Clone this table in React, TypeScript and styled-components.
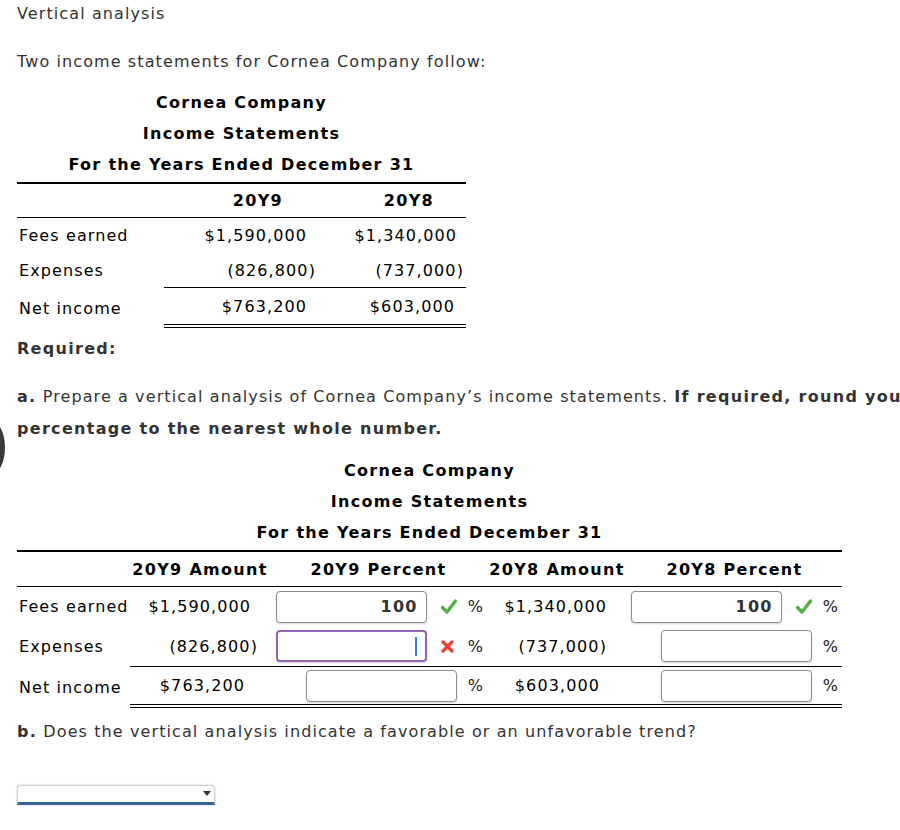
import styled, { createGlobalStyle } from "styled-components";

const GlobalStyle = createGlobalStyle`
  html, body {
    margin: 0;
    padding: 0;
    background: #fff;
    overflow: hidden;
  }
  body {
    font-family: "DejaVu Sans", Verdana, sans-serif;
    font-size: 16px;
    letter-spacing: 1.1px;
    color: #333;
  }
  b, th {
    letter-spacing: 1.3px;
  }
`;

const Page = styled.div`
  position: relative;
  width: 900px;
  height: 830px;
  box-sizing: border-box;
  padding: 4px 0 0 17px;
`;

const Para = styled.p<{ $top: number }>`
  margin: ${(p) => p.$top}px 0 0;
  line-height: 20px;
  white-space: nowrap;
`;

const LongPara = styled.p`
  margin: 22px 0 0;
  line-height: 32px;
  white-space: nowrap;
`;

const B = styled.b`
  font-weight: bold;
`;

const Statement = styled.div<{ $width: number; $top: number }>`
  width: ${(p) => p.$width}px;
  margin-top: ${(p) => p.$top}px;
  color: #000;
`;

const Titles = styled.div`
  text-align: center;
  font-weight: bold;
  letter-spacing: 1.3px;
  line-height: 31px;
  margin-bottom: 2px;
`;

const Table = styled.table`
  width: 100%;
  border-collapse: separate;
  border-spacing: 0;
  table-layout: fixed;
  font-size: 16px;
`;

const Row = styled.tr<{ $h: number }>`
  height: ${(p) => p.$h}px;
`;

const HeadCell = styled.th<{ $align?: string; $pr?: number }>`
  padding: 0 ${(p) => p.$pr ?? 0}px 0 0;
  text-align: ${(p) => p.$align ?? "center"};
  font-weight: bold;
  border-top: 2px solid #000;
  border-bottom: 1px solid #000;
  white-space: nowrap;
`;

const Label = styled.td`
  padding: 0 0 0 2px;
  text-align: left;
  white-space: nowrap;
`;

const Amount = styled.td<{ $pr: number; $line?: "single" | "double" }>`
  padding: 0 ${(p) => p.$pr}px 0 0;
  text-align: right;
  white-space: nowrap;
  border-bottom: ${(p) =>
    p.$line === "single"
      ? "1px solid #000"
      : p.$line === "double"
      ? "4px double #000"
      : "none"};
`;

const PctCell = styled.td<{ $line?: "single" | "double" }>`
  padding: 0 4px 0 0;
  border-bottom: ${(p) =>
    p.$line === "single"
      ? "1px solid #000"
      : p.$line === "double"
      ? "4px double #000"
      : "none"};
`;

const PctWrap = styled.div`
  display: flex;
  justify-content: flex-end;
  align-items: center;
`;

const Field = styled.div<{ $focused?: boolean }>`
  box-sizing: border-box;
  width: 151px;
  height: 32px;
  display: flex;
  align-items: center;
  justify-content: flex-end;
  padding-right: 8px;
  background: #fff;
  border: ${(p) => (p.$focused ? "2px solid #9265b5" : "1px solid #8c8c8c")};
  border-radius: 4px;
  box-shadow: 0 1px 2px rgba(0, 0, 0, 0.18);
  font-weight: bold;
  letter-spacing: 1.3px;
  color: #333;
`;

const Caret = styled.span`
  display: block;
  width: 2px;
  height: 19px;
  background: #3b82c4;
`;

const IconBox = styled.span`
  display: flex;
  width: 16px;
  margin-left: 14px;
`;

const Percent = styled.span`
  margin-left: 11px;
  letter-spacing: 0;
  color: #222;
`;

const Dropdown = styled.div`
  margin-top: 43px;
  position: relative;
  width: 198px;
  height: 20px;
  box-sizing: border-box;
  background: #fff;
  border: 1px solid #d0d0d0;
  border-bottom: 3px solid #3c6597;
  border-radius: 4px 4px 0 0;
  box-shadow: 0 0 2px rgba(0, 0, 0, 0.25);
`;

const Arrow = styled.span`
  position: absolute;
  right: 3px;
  top: 5px;
  width: 0;
  height: 0;
  border-left: 4px solid transparent;
  border-right: 4px solid transparent;
  border-top: 5px solid #333;
`;

const HintTab = styled.div`
  position: absolute;
  left: -22px;
  top: 421px;
  width: 27px;
  height: 53px;
  border-radius: 50%;
  background: #3a3a3a;
`;

const Check = () => (
  <svg width="16" height="15" viewBox="0 0 16 15">
    <path
      d="M1.5 8.5 L6 13 L14.5 2"
      fill="none"
      stroke="#55ad47"
      strokeWidth="3.4"
      strokeLinecap="round"
      strokeLinejoin="round"
    />
  </svg>
);

const Cross = () => (
  <svg width="13" height="13" viewBox="0 0 13 13">
    <path
      d="M2 2 L11 11 M11 2 L2 11"
      fill="none"
      stroke="#e5412d"
      strokeWidth="3.2"
      strokeLinecap="round"
    />
  </svg>
);

type Mark = "check" | "cross" | undefined;

const PctInput = ({
  value,
  mark,
  focused,
}: {
  value?: string;
  mark?: Mark;
  focused?: boolean;
}) => (
  <PctWrap>
    <Field $focused={focused}>{focused ? <Caret /> : value}</Field>
    {mark && <IconBox>{mark === "check" ? <Check /> : <Cross />}</IconBox>}
    <Percent>%</Percent>
  </PctWrap>
);

const TitleBlock = () => (
  <Titles>
    <div>Cornea Company</div>
    <div>Income Statements</div>
    <div>For the Years Ended December 31</div>
  </Titles>
);

export default function App() {
  return (
    <>
      <GlobalStyle />
      <Page>
        <HintTab />
        <Para $top={0}>Vertical analysis</Para>
        <Para $top={28}>Two income statements for Cornea Company follow:</Para>

        <Statement $width={449} $top={15}>
          <TitleBlock />
          <Table>
            <colgroup>
              <col style={{ width: 147 }} />
              <col style={{ width: 152 }} />
              <col style={{ width: 150 }} />
            </colgroup>
            <tbody>
              <Row $h={36}>
                <HeadCell />
                <HeadCell $align="right" $pr={33}>
                  20Y9
                </HeadCell>
                <HeadCell $align="right" $pr={32}>
                  20Y8
                </HeadCell>
              </Row>
              <Row $h={35}>
                <Label>Fees earned</Label>
                <Amount $pr={9}>$1,590,000</Amount>
                <Amount $pr={9}>$1,340,000</Amount>
              </Row>
              <Row $h={35}>
                <Label>Expenses</Label>
                <Amount $pr={0} $line="single">
                  (826,800)
                </Amount>
                <Amount $pr={2} $line="single">
                  (737,000)
                </Amount>
              </Row>
              <Row $h={40}>
                <Label>Net income</Label>
                <Amount $pr={9} $line="double">
                  $763,200
                </Amount>
                <Amount $pr={11} $line="double">
                  $603,000
                </Amount>
              </Row>
            </tbody>
          </Table>
        </Statement>

        <Para $top={11}>
          <B>Required:</B>
        </Para>
        <LongPara>
          <B>a.</B> Prepare a vertical analysis of Cornea Company’s income
          statements. <B>If required, round your</B>
          <br />
          <B>percentage to the nearest whole number.</B>
        </LongPara>

        <Statement $width={825} $top={10}>
          <TitleBlock />
          <Table>
            <colgroup>
              <col style={{ width: 113 }} />
              <col style={{ width: 140 }} />
              <col style={{ width: 217 }} />
              <col style={{ width: 140 }} />
              <col style={{ width: 215 }} />
            </colgroup>
            <tbody>
              <Row $h={37}>
                <HeadCell />
                <HeadCell>20Y9 Amount</HeadCell>
                <HeadCell>20Y9 Percent</HeadCell>
                <HeadCell>20Y8 Amount</HeadCell>
                <HeadCell>20Y8 Percent</HeadCell>
              </Row>
              <Row $h={39}>
                <Label>Fees earned</Label>
                <Amount $pr={19}>$1,590,000</Amount>
                <PctCell>
                  <PctInput value="100" mark="check" />
                </PctCell>
                <Amount $pr={20}>$1,340,000</Amount>
                <PctCell>
                  <PctInput value="100" mark="check" />
                </PctCell>
              </Row>
              <Row $h={41}>
                <Label>Expenses</Label>
                <Amount $pr={12} $line="single">
                  (826,800)
                </Amount>
                <PctCell $line="single">
                  <PctInput focused mark="cross" />
                </PctCell>
                <Amount $pr={20} $line="single">
                  (737,000)
                </Amount>
                <PctCell $line="single">
                  <PctInput />
                </PctCell>
              </Row>
              <Row $h={41}>
                <Label>Net income</Label>
                <Amount $pr={25} $line="double">
                  $763,200
                </Amount>
                <PctCell $line="double">
                  <PctInput />
                </PctCell>
                <Amount $pr={27} $line="double">
                  $603,000
                </Amount>
                <PctCell $line="double">
                  <PctInput />
                </PctCell>
              </Row>
            </tbody>
          </Table>
        </Statement>

        <Para $top={14}>
          <B>b.</B> Does the vertical analysis indicate a favorable or an
          unfavorable trend?
        </Para>
        <Dropdown>
          <Arrow />
        </Dropdown>
      </Page>
    </>
  );
}
